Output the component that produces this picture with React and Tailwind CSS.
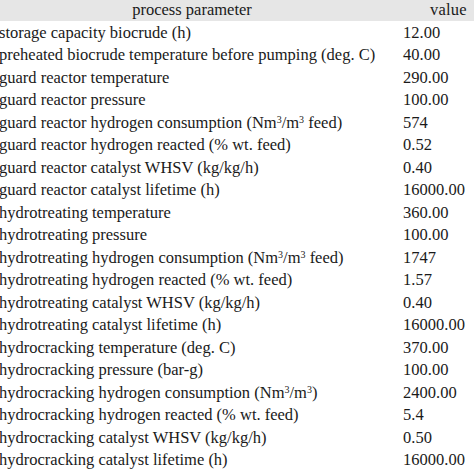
import React from "react";

const rows = [
  ["storage capacity biocrude (h)", "12.00"],
  ["preheated biocrude temperature before pumping (deg. C)", "40.00"],
  ["guard reactor temperature", "290.00"],
  ["guard reactor pressure", "100.00"],
  [<>guard reactor hydrogen consumption (Nm<sup>3</sup>/m<sup>3</sup> feed)</>, "574"],
  ["guard reactor hydrogen reacted (% wt. feed)", "0.52"],
  ["guard reactor catalyst WHSV (kg/kg/h)", "0.40"],
  ["guard reactor catalyst lifetime (h)", "16000.00"],
  ["hydrotreating temperature", "360.00"],
  ["hydrotreating pressure", "100.00"],
  [<>hydrotreating hydrogen consumption (Nm<sup>3</sup>/m<sup>3</sup> feed)</>, "1747"],
  ["hydrotreating hydrogen reacted (% wt. feed)", "1.57"],
  ["hydrotreating catalyst WHSV (kg/kg/h)", "0.40"],
  ["hydrotreating catalyst lifetime (h)", "16000.00"],
  ["hydrocracking temperature (deg. C)", "370.00"],
  ["hydrocracking pressure (bar-g)", "100.00"],
  [<>hydrocracking hydrogen consumption (Nm<sup>3</sup>/m<sup>3</sup>)</>, "2400.00"],
  ["hydrocracking hydrogen reacted (% wt. feed)", "5.4"],
  ["hydrocracking catalyst WHSV (kg/kg/h)", "0.50"],
  ["hydrocracking catalyst lifetime (h)", "16000.00"],
];

export default function App() {
  return (
    <div className="w-[474px] h-[469px] overflow-hidden bg-white text-[#1a1a1a] font-['Liberation_Serif',serif] text-[16.5px]">
      <div className="flex h-[21px] items-center bg-[#e6e6e6] mb-[1px]">
        <div className="w-[384px] text-center">process parameter</div>
        <div className="flex-1 pl-[46px] tracking-[0.2px]">value</div>
      </div>
      {rows.map(([p, v], i) => (
        <div key={i} className="flex h-[22.5px] items-center whitespace-nowrap [&_sup]:text-[10px] [&_sup]:leading-none">
          <div className="w-[404px] -ml-[1px]">{p}</div>
          <div className="flex-1">{v}</div>
        </div>
      ))}
    </div>
  );
}
